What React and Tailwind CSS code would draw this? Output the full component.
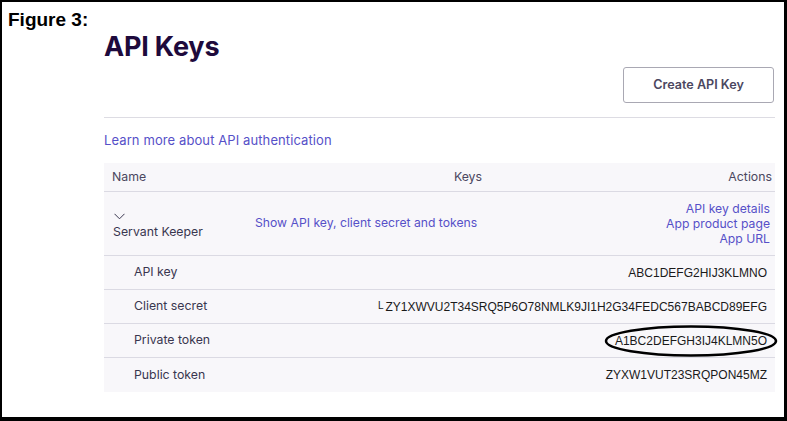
import React from 'react';

const SUB_ROWS = [
  { label: 'API key', value: 'ABC1DEFG2HIJ3KLMNO' },
  { label: 'Client secret', value: 'ZY1XWVU2T34SRQ5P6O78NMLK9JI1H2G34FEDC567BABCD89EFG', prefix: 'L' },
  { label: 'Private token', value: 'A1BC2DEFGH3IJ4KLMN5O', circled: true },
  { label: 'Public token', value: 'ZYXW1VUT23SRQPON45MZ' },
];

const ui = { fontFamily: 'Inter, "Noto Sans", sans-serif' };
const arial = { fontFamily: '"Liberation Sans", Arial, sans-serif' };

export default function App() {
  return (
    <div
      className="w-[787px] h-[421px] bg-white border-black border-t-2 border-l-2 border-r-[3px] border-b-[4px] overflow-hidden"
      style={ui}
    >
      <div className="pl-[6px] pt-[7px] h-[29px] text-[19px] leading-[22px] font-bold text-black" style={arial}>
        Figure 3:
      </div>

      <div className="ml-[102px] w-[671px]">
        <h1 className="mt-[-1px] text-[27px] leading-[34px] font-bold text-[#1e0a3c] tracking-[-0.2px]">
          API Keys
        </h1>

        <div className="mt-[3px] flex justify-end pr-[1px]">
          <button className="w-[151px] h-[36px] border border-[#a9a8b3] rounded-[3px] bg-white text-[12.6px] font-semibold text-[#4b4760]">
            Create API Key
          </button>
        </div>

        <div className="mt-[14px] h-px bg-[#dddce3]" />

        <div className="mt-[12px] text-[13px] leading-[20px] text-[#5650c8] tracking-[0.1px]">
          Learn more about API authentication
        </div>

        <div className="mt-[13px] bg-[#f8f7fa] text-[12.3px] text-[#39364f]">
          {/* header */}
          <div className="h-[29px] grid grid-cols-[143px_227px_1fr] items-center pl-[8px] pr-[3px] border-b border-[#dbdae3] text-[#4b4760]">
            <div>Name</div>
            <div className="text-right">Keys</div>
            <div className="text-right">Actions</div>
          </div>

          {/* app row */}
          <div className="h-[64px] grid grid-cols-[142px_227px_1fr] items-center pl-[9px] pr-[5px] border-b border-[#dbdae3]">
            <div className="flex flex-col pt-[6px]">
              <svg width="11" height="7" viewBox="0 0 11 7" className="ml-[1px] mb-[4px]">
                <path d="M0.5 0.8 L5.5 5.8 L10.5 0.8" fill="none" stroke="#39364f" strokeWidth="1" />
              </svg>
              <span className="leading-[16px]">Servant Keeper</span>
            </div>
            <div className="text-[#5650c8] whitespace-nowrap text-[12.2px]">
              Show API key, client secret and tokens
            </div>
            <div className="flex flex-col items-end text-[#5650c8] leading-[15px] text-[12.2px]">
              <span>API key details</span>
              <span>App product page</span>
              <span>App URL</span>
            </div>
          </div>

          {SUB_ROWS.map((row, i) => (
            <div
              key={row.label}
              className={`relative h-[34px] flex items-center justify-between pl-[30px] pr-[8px] ${
                i < SUB_ROWS.length - 1 ? 'border-b border-[#dbdae3]' : ''
              }`}
            >
              <span>{row.label}</span>
              <span className="text-[12px] text-[#1a1a1a] flex items-baseline" style={arial}>
                {row.prefix && <span className="text-[10px] mr-[2px] relative top-[-2px]">{row.prefix}</span>}
                {row.value}
              </span>
              {row.circled && (
                <svg
                  className="absolute left-[500px] top-[0px]"
                  width="176"
                  height="34"
                  viewBox="0 0 176 34"
                >
                  <ellipse cx="87" cy="17" rx="85" ry="14.5" fill="none" stroke="#000" strokeWidth="2.5" />
                </svg>
              )}
            </div>
          ))}
        </div>
      </div>
    </div>
  );
}
